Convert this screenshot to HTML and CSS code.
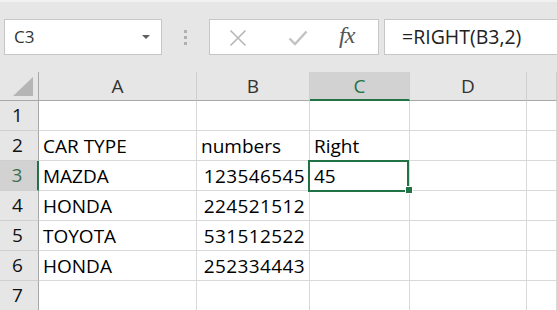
FILE: index.html
```html
<!DOCTYPE html>
<html>
<head>
<meta charset="utf-8">
<link rel="stylesheet" href="styles.css">
</head>
<body>
<div class="toolbar">
  <div class="namebox">
    <span class="name">C3</span>
    <svg class="caret" width="8" height="5" viewBox="0 0 8 5"><polygon points="0,0 8,0 4,4" fill="#5f5f5f"/></svg>
  </div>
  <div class="grip"><span></span><span></span><span></span></div>
  <div class="buttons">
    <svg class="icon-x" width="18" height="18" viewBox="0 0 18 18"><path d="M1.5 1.5 L16.5 16.5 M16.5 1.5 L1.5 16.5" stroke="#b7b7b7" stroke-width="1.6" fill="none"/></svg>
    <svg class="icon-check" width="20" height="16" viewBox="0 0 20 16"><path d="M1.5 8.5 L7 14 L18.5 1.5" stroke="#c2c2c2" stroke-width="2.4" fill="none"/></svg>
    <span class="fx">fx</span>
  </div>
  <div class="formula">=RIGHT(B3,2)</div>
</div>
<div class="sheet">
  <div class="corner"><svg width="20" height="19" viewBox="0 0 20 19"><polygon points="20,0 20,19 0,19" fill="#b5b5b5"/></svg></div>
  <div class="colhead">A</div>
  <div class="colhead">B</div>
  <div class="colhead sel">C</div>
  <div class="colhead">D</div>
  <div class="colhead"></div>

  <div class="rowhead">1</div>
  <div class="cell"></div><div class="cell"></div><div class="cell"></div><div class="cell"></div><div class="cell"></div>

  <div class="rowhead">2</div>
  <div class="cell">CAR TYPE</div><div class="cell">numbers</div><div class="cell">Right</div><div class="cell"></div><div class="cell"></div>

  <div class="rowhead sel">3</div>
  <div class="cell">MAZDA</div><div class="cell num">123546545</div><div class="cell active">45<span class="handle"></span></div><div class="cell"></div><div class="cell"></div>

  <div class="rowhead">4</div>
  <div class="cell">HONDA</div><div class="cell num">224521512</div><div class="cell"></div><div class="cell"></div><div class="cell"></div>

  <div class="rowhead">5</div>
  <div class="cell">TOYOTA</div><div class="cell num">531512522</div><div class="cell"></div><div class="cell"></div><div class="cell"></div>

  <div class="rowhead">6</div>
  <div class="cell">HONDA</div><div class="cell num">252334443</div><div class="cell"></div><div class="cell"></div><div class="cell"></div>

  <div class="rowhead">7</div>
  <div class="cell"></div><div class="cell"></div><div class="cell"></div><div class="cell"></div><div class="cell"></div>
</div>
</body>
</html>
```

FILE: styles.css
```css
* { box-sizing: border-box; }
html, body { margin: 0; padding: 0; }
body {
  width: 557px;
  height: 310px;
  overflow: hidden;
  background: #e6e6e6;
  font-family: "Open Sans", "Liberation Sans", sans-serif;
}
.toolbar {
  height: 72px;
  border-top: 2px solid #f1f1f1;
  padding-top: 17px;
  display: flex;
  align-items: flex-start;
}
.namebox {
  margin-left: 4px;
  width: 158px;
  height: 36px;
  background: #fff;
  border: 1px solid #c6c6c6;
  display: flex;
  align-items: center;
  justify-content: space-between;
  padding: 0 11px 1px 9px;
}
.name {
  font-size: 17px;
  color: #333;
}
.caret { margin-top: 1px; }
.grip {
  width: 47px;
  height: 36px;
  display: flex;
  flex-direction: column;
  align-items: center;
  justify-content: center;
  gap: 3px;
}
.grip span {
  width: 3px;
  height: 3px;
  background: #b0b0b0;
}
.buttons {
  width: 170px;
  height: 36px;
  background: #fff;
  border: 1px solid #c6c6c6;
  display: flex;
  align-items: center;
  padding-left: 19px;
}
.icon-x { margin-top: 1px; }
.icon-check { margin-left: 41px; margin-top: 2px; }
.fx {
  margin-left: 31px;
  font-family: "Liberation Serif", "DejaVu Serif", serif;
  font-style: italic;
  font-size: 24px;
  color: #555;
  letter-spacing: -1px;
  margin-top: -3px;
}
.formula {
  margin-left: 5px;
  flex: 1;
  margin-right: -4px;
  height: 36px;
  background: #fff;
  border: 1px solid #c6c6c6;
  padding-left: 17px;
  font-size: 19.5px;
  line-height: 33px;
  color: #222;
}
.sheet {
  display: grid;
  grid-template-columns: 39px 158px 113px 100px 117px 1fr;
  grid-template-rows: 29px repeat(7, 30px);
  background: #fff;
}
.corner {
  background: #e6e6e6;
  border-right: 1px solid #a8a8a8;
  border-bottom: 1px solid #a8a8a8;
  display: flex;
  align-items: flex-end;
  justify-content: flex-end;
  padding: 0 5px 4px 0;
}
.corner svg { display: block; }
.colhead {
  background: #e6e6e6;
  border-right: 1px solid #cfcfcf;
  border-bottom: 1px solid #a8a8a8;
  text-align: center;
  font-size: 19px;
  line-height: 28px;
  color: #333;
}
.colhead.sel {
  background: #d2d2d2;
  color: #217346;
  border-bottom: 2px solid #217346;
}
.rowhead {
  background: #e6e6e6;
  border-right: 1px solid #a8a8a8;
  border-bottom: 1px solid #cfcfcf;
  text-align: center;
  font-size: 19px;
  line-height: 29px;
  color: #111;
  padding-right: 3px;
}
.rowhead.sel {
  background: #d2d2d2;
  color: #3e6e52;
  border-right: 2px solid #217346;
}
.cell {
  border-right: 1px solid #d9d9d9;
  border-bottom: 1px solid #d9d9d9;
  font-size: 19px;
  line-height: 30px;
  color: #000;
  padding: 0 4px;
  white-space: nowrap;
  overflow: visible;
}
.cell.num {
  text-align: right;
  letter-spacing: 0.4px;
}
.cell.active {
  position: relative;
}
.cell.active::before {
  content: "";
  position: absolute;
  left: -2px;
  right: 0;
  top: -1px;
  bottom: -2px;
  border: 2px solid #217346;
  pointer-events: none;
}
.handle {
  position: absolute;
  left: 96px;
  top: 26px;
  width: 6px;
  height: 6px;
  background: #217346;
  box-shadow: 0 0 0 1px #fff;
}
```
